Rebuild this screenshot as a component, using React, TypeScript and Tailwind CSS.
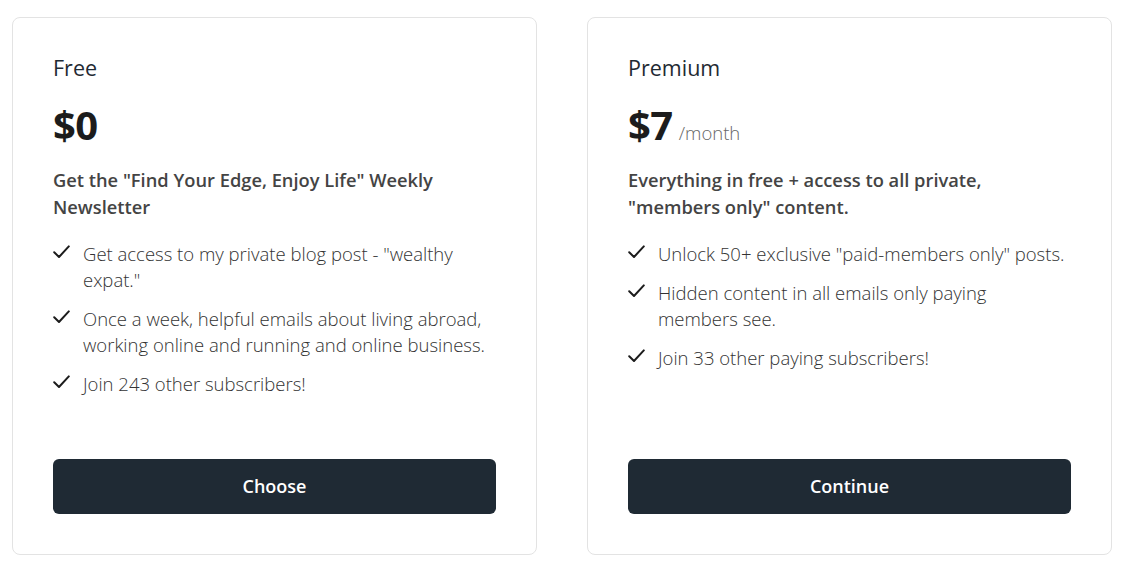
interface Plan {
  name: string;
  price: string;
  period?: string;
  blurb: string;
  features: string[];
  cta: string;
}

const plans: Plan[] = [
  {
    name: "Free",
    price: "$0",
    blurb: 'Get the "Find Your Edge, Enjoy Life" Weekly Newsletter',
    features: [
      'Get access to my private blog post - "wealthy expat."',
      "Once a week, helpful emails about living abroad, working online and running and online business.",
      "Join 243 other subscribers!",
    ],
    cta: "Choose",
  },
  {
    name: "Premium",
    price: "$7",
    period: "/month",
    blurb: 'Everything in free + access to all private, "members only" content.',
    features: [
      'Unlock 50+ exclusive "paid-members only" posts.',
      "Hidden content in all emails only paying members see.",
      "Join 33 other paying subscribers!",
    ],
    cta: "Continue",
  },
];

function CheckMark() {
  return (
    <svg width="17" height="14" viewBox="0 0 17 14" fill="none" className="mt-[4px] shrink-0">
      <path d="M1.2 7.2 L6 12 L15.8 1.4" stroke="#1c1c1c" strokeWidth="2" strokeLinecap="round" strokeLinejoin="round" />
    </svg>
  );
}

export default function App() {
  return (
    <div
      className="min-h-screen bg-white pl-3 pt-[17px] flex gap-[50px]"
      style={{ fontFamily: '"Open Sans", "Noto Sans", sans-serif' }}
    >
      {plans.map((plan) => (
        <div
          key={plan.name}
          className="w-[525px] h-[538px] border border-[#e3e3e3] rounded-lg px-10 pt-[36px] pb-10 flex flex-col"
        >
          <h2 className="text-[21.5px] leading-[28px] text-[#1f2a33]">{plan.name}</h2>

          <div className="mt-[19px] flex items-baseline gap-[6px]">
            <span className="text-[40px] leading-[48px] font-bold text-[#1c1c1c] tracking-[-0.5px]">
              {plan.price}
            </span>
            {plan.period && (
              <span className="text-[18.5px] font-light text-[#666]">{plan.period}</span>
            )}
          </div>

          <p className="mt-[17px] text-[18.3px] leading-[27px] font-semibold text-[#444]">
            {plan.blurb}
          </p>

          <ul className="mt-[21px] flex flex-col gap-[13px]">
            {plan.features.map((f) => (
              <li key={f} className="flex items-start gap-[13px]">
                <CheckMark />
                <span className="text-[18.5px] leading-[26px] font-light text-[#333]">{f}</span>
              </li>
            ))}
          </ul>

          <button className="mt-auto h-[55px] w-full rounded-md bg-[#1f2a34] text-white text-[18px] font-semibold">
            {plan.cta}
          </button>
        </div>
      ))}
    </div>
  );
}
